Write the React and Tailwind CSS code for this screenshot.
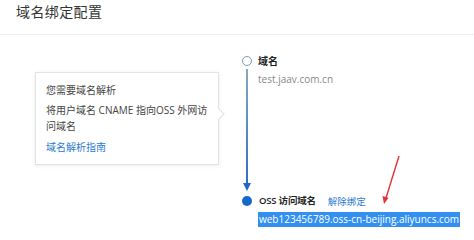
const font = { fontFamily: '"Open Sans", "Noto Sans CJK SC", sans-serif' };

export default function App() {
  return (
    <div
      className="relative w-[474px] h-[240px] overflow-hidden bg-white text-[#333]"
      style={font}
    >
      {/* header */}
      <div className="h-[35px] border-b border-[#eeeeee] pl-4 pt-[3px]">
        <h1 className="text-[14px] leading-[18px] tracking-[0.4px] text-[#333]">域名绑定配置</h1>
      </div>

      <div className="flex">
        {/* popover column */}
        <div className="w-[242px] shrink-0 pl-[35px] pt-[37px]">
          <div className="relative w-[184px] border border-[#e3e3e3] bg-white px-[10px] pt-[8px] pb-[8px] shadow-[0_1px_4px_rgba(0,0,0,0.08)]">
            <p className="text-[10px] leading-[18px] text-[#444]">您需要域名解析</p>
            <p className="mt-[3px] text-[10px] leading-[16px] text-[#444]">
              将用户域名 CNAME 指向OSS 外网访
              <br />
              问域名
            </p>
            <a className="mt-[4px] block text-[10px] leading-[18px] text-[#2b7bd1]">域名解析指南</a>
            <span className="absolute right-[-5px] top-[37px] h-2 w-2 rotate-45 border-r border-t border-[#e3e3e3] bg-white" />
          </div>
        </div>

        {/* timeline column */}
        <div className="flex flex-col whitespace-nowrap pt-[18px]">
          <div className="flex h-[16px] items-center">
            <span className="h-[10px] w-[10px] rounded-full border-[1.5px] border-[#7d9bb8]" />
            <span className="ml-[6px] text-[10px] font-semibold text-[#222]">域名</span>
          </div>

          <div className="flex">
            <div className="flex w-[10px] flex-col items-center">
              <div className="h-[114px] w-[1.5px] bg-gradient-to-b from-[#8aa6c0] to-[#2a6fc4]" />
              <div className="h-0 w-0 border-x-[4px] border-t-[8px] border-x-transparent border-t-[#1f68c6]" />
            </div>
            <div className="ml-[6px] pt-[3px] text-[10px] leading-[14px] text-[#888]">test.jaav.com.cn</div>
          </div>

          <div className="mt-[4px] flex h-[12px] items-center">
            <span className="h-[10px] w-[10px] rounded-full bg-[#1767cd]" />
            <span className="ml-[7px] text-[9.5px] font-semibold tracking-[-0.2px] text-[#222]">OSS 访问域名</span>
            <a className="ml-[12px] mt-[3px] text-[9.5px] text-[#2b7bd1]">解除绑定</a>
          </div>

          <div className="ml-[16px] mt-[5px] flex">
            <span className="block bg-[#3390f0] px-[1px] text-[10px] leading-[15px] text-white">
              web123456789.oss-cn-beijing.aliyuncs.com
            </span>
          </div>
        </div>
      </div>

      {/* red annotation arrow */}
      <svg className="absolute left-0 top-0" width="474" height="240" viewBox="0 0 474 240">
        <line x1="399" y1="156" x2="386" y2="198" stroke="#e2333d" strokeWidth="1.4" />
        <path d="M384 204 L382.5 196 L388.5 197.8 Z" fill="#e2333d" />
      </svg>
    </div>
  );
}
